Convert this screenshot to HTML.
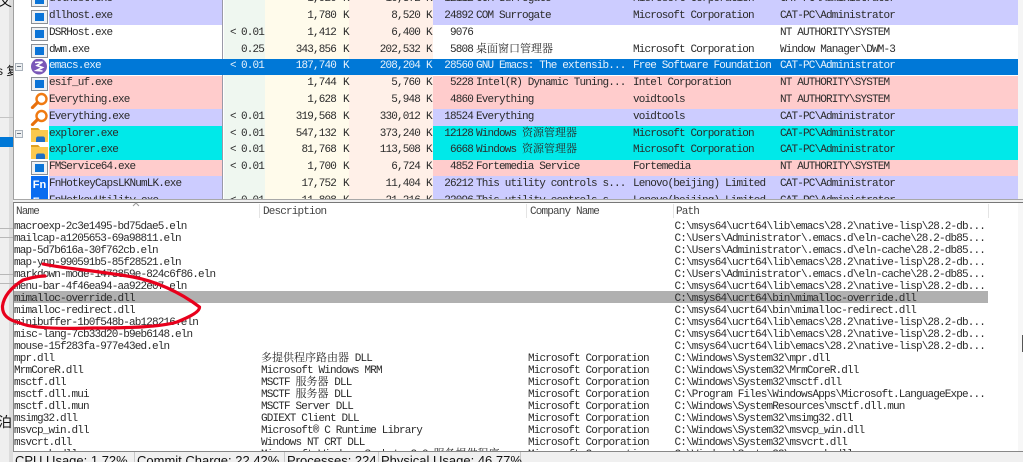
<!DOCTYPE html>
<html><head><meta charset="utf-8"><style>
html,body{margin:0;padding:0;width:1023px;height:462px;overflow:hidden;background:#f0f0f0}
*{box-sizing:border-box}
#root{position:relative;width:1023px;height:462px;overflow:hidden;font-family:"Liberation Mono","Noto Serif CJK SC",monospace;font-size:11px;letter-spacing:-.85px;color:#2a2a2a}
.abs{position:absolute}
#u{position:absolute;left:13px;top:0;width:1010px;height:199px;overflow:hidden;background:#fff}
#u .inner{position:absolute;left:-13px;top:0;width:1023px;height:199px}
.colb{position:absolute;top:0;height:199px}
.r{position:absolute;left:0;width:1023px;height:16.8px;line-height:13px}
.r span,.q span{position:absolute;top:1.5px;white-space:nowrap}
.r span span,.q span span{top:auto}
.bga,.bgb{position:absolute;top:0;height:100%}
.bga{left:49px;width:173px}.bgb{left:433px;width:585px}
.p .bga,.p .bgb{background:#ffcccc}
.b .bga,.b .bgb{background:#ccccff}
.c .bga,.c .bgb{background:#00e9e9}
.sel .all{position:absolute;left:49px;width:969px;top:0;height:16.4px;background:#0078d7}
.sel{color:#e8f2fb}
.n{left:49px}.l{left:230px}.cp{right:759px}.v{right:687px}.k{left:343px}.w{right:603px}.k2{left:426px}
.pid{right:550px}.e{left:476px}.f{left:633px}.g{left:780px}
.z{font-size:11px;letter-spacing:0}
.ic{position:absolute;left:31px;top:1.5px;width:17px;height:14px;background:#eef1f4;border:1px solid #8a8f96}
.ic:after{content:"";position:absolute;left:3px;top:2px;width:9px;height:8px;background:#0a74d8}
svg.i{position:absolute;left:30px;top:0}
.q{position:absolute;left:0;width:1023px;height:12.03px;line-height:12px}
.q .a{left:14px}.q .d{left:261px}.q .o{left:528px}.q .h{left:674.5px}
.hd{position:absolute;top:205px;line-height:14px;color:#444}
.st{position:absolute;top:454px;font:13px/14px "Liberation Sans",sans-serif;letter-spacing:0;color:#111;white-space:nowrap}
.box{position:absolute;left:15px;width:8px;height:8px;background:#eef0f2;border:1px solid #a9b1ba}
.box:after{content:"";position:absolute;left:1px;top:2px;width:4px;height:1px;background:#6a7480}
</style></head><body><div id="root">

<!-- left sliver -->
<div class="abs" style="left:0;top:0;width:13px;height:462px;background:#efefef"></div>
<div class="abs" style="left:9px;top:0;width:4px;height:462px;background:#dcdcdc"></div>
<div class="abs" style="left:0;top:137px;width:13px;height:10px;background:#0078d7"></div>
<div class="abs" style="left:0;top:117px;width:13px;height:1px;background:#c4c4c4"></div>
<div class="abs" style="left:0;top:228px;width:13px;height:1px;background:#b8b8b8"></div>
<div class="abs" style="left:0;top:237px;width:13px;height:1px;background:#b8b8b8"></div>
<div class="abs" style="left:0;top:274px;width:13px;height:1px;background:#b8b8b8"></div>
<div class="abs" style="left:0;top:283px;width:13px;height:1px;background:#b8b8b8"></div>
<div class="abs" style="left:-3px;top:64px;font:12px/14px 'Liberation Sans','Noto Sans CJK SC',sans-serif;letter-spacing:0;color:#111">s 复</div>
<div class="abs" style="left:-2px;top:413px;font:14px/18px 'Liberation Sans','Noto Sans CJK SC',sans-serif;letter-spacing:0;color:#111">泊</div>
<div class="abs" style="left:-2px;top:-7px;font:14px/16px 'Liberation Sans','Noto Sans CJK SC',sans-serif;letter-spacing:0;color:#111">文</div>

<!-- upper panel -->
<div id="u"><div class="inner">
<div class="colb" style="left:224px;width:41px;background:#eff7f0"></div>
<div class="colb" style="left:265px;width:84px;background:#fffbeb"></div>
<div class="colb" style="left:349px;width:84px;background:#fff0e8"></div>
<div class="colb" style="left:222px;width:1px;background:#9a9aa8"></div>

<div class="r b" style="top:-8.4px"><div class="bga"></div><div class="bgb"></div><div class="ic"></div><span class="n">dllhost.exe</span><span class="v">1,920</span><span class="k">K</span><span class="w">10,372</span><span class="k2">K</span><span class="pid">12112</span><span class="e">COM Surrogate</span><span class="f">Microsoft Corporation</span><span class="g">CAT-PC\Administrator</span></div>

<div class="r b" style="top:8.4px"><div class="bga"></div><div class="bgb"></div><div class="ic"></div><span class="n">dllhost.exe</span><span class="v">1,780</span><span class="k">K</span><span class="w">8,520</span><span class="k2">K</span><span class="pid">24892</span><span class="e">COM Surrogate</span><span class="f">Microsoft Corporation</span><span class="g">CAT-PC\Administrator</span></div>

<div class="r" style="top:25.2px"><div class="ic"></div><span class="n">DSRHost.exe</span><span class="l">&lt;</span><span class="cp">0.01</span><span class="v">1,412</span><span class="k">K</span><span class="w">6,400</span><span class="k2">K</span><span class="pid">9076</span><span class="g">NT AUTHORITY\SYSTEM</span></div>

<div class="r" style="top:42px"><div class="ic"></div><span class="n">dwm.exe</span><span class="cp">0.25</span><span class="v">343,856</span><span class="k">K</span><span class="w">202,532</span><span class="k2">K</span><span class="pid">5808</span><span class="e z">桌面窗口管理器</span><span class="f">Microsoft Corporation</span><span class="g">Window Manager\DWM-3</span></div>

<div class="r sel" style="top:58.8px"><div class="all"></div><svg class="i" width="20" height="17" viewBox="0 0 20 17"><circle cx="9" cy="7.5" r="8" fill="#7a58b8"/><path d="M5 3.5 L12.5 3 L7 6.5 L12.5 8.5 L6.5 11.5 L12.5 12" fill="none" stroke="#fff" stroke-width="1.6"/></svg><span class="n">emacs.exe</span><span class="l">&lt;</span><span class="cp">0.01</span><span class="v">187,740</span><span class="k">K</span><span class="w">208,204</span><span class="k2">K</span><span class="pid">28560</span><span class="e">GNU Emacs: The extensib...</span><span class="f">Free Software Foundation</span><span class="g">CAT-PC\Administrator</span></div>

<div class="r p" style="top:75.6px"><div class="bga"></div><div class="bgb"></div><div class="ic"></div><span class="n">esif_uf.exe</span><span class="v">1,744</span><span class="k">K</span><span class="w">5,760</span><span class="k2">K</span><span class="pid">5228</span><span class="e">Intel(R) Dynamic Tuning...</span><span class="f">Intel Corporation</span><span class="g">NT AUTHORITY\SYSTEM</span></div>

<div class="r p" style="top:92.4px"><div class="bga"></div><div class="bgb"></div><svg class="i" width="20" height="17" viewBox="0 0 20 17"><circle cx="11.5" cy="7" r="5" fill="#fff" stroke="#f07a12" stroke-width="2.4"/><path d="M7.5 10.5 L2.5 15.5" stroke="#e8700c" stroke-width="3.2" stroke-linecap="round"/></svg><span class="n">Everything.exe</span><span class="v">1,628</span><span class="k">K</span><span class="w">5,948</span><span class="k2">K</span><span class="pid">4860</span><span class="e">Everything</span><span class="f">voidtools</span><span class="g">NT AUTHORITY\SYSTEM</span></div>

<div class="r b" style="top:109.2px"><div class="bga"></div><div class="bgb"></div><svg class="i" width="20" height="17" viewBox="0 0 20 17"><circle cx="11.5" cy="7" r="5" fill="#fff" stroke="#f07a12" stroke-width="2.4"/><path d="M7.5 10.5 L2.5 15.5" stroke="#e8700c" stroke-width="3.2" stroke-linecap="round"/></svg><span class="n">Everything.exe</span><span class="l">&lt;</span><span class="cp">0.01</span><span class="v">319,568</span><span class="k">K</span><span class="w">330,012</span><span class="k2">K</span><span class="pid">18524</span><span class="e">Everything</span><span class="f">voidtools</span><span class="g">CAT-PC\Administrator</span></div>

<div class="r c" style="top:126px"><div class="bga"></div><div class="bgb"></div><svg class="i" width="20" height="17" viewBox="0 0 20 17"><path d="M1 2 H8 L10 4 H18 V16 H1Z" fill="#fbc94e"/><path d="M1 2 H8 L10 4 H1Z" fill="#e0a020"/><path d="M6 13 Q6 10.5 8 10.5 H13 Q15 10.5 15 13 V16 H6Z" fill="#1f6fc4"/></svg><span class="n">explorer.exe</span><span class="l">&lt;</span><span class="cp">0.01</span><span class="v">547,132</span><span class="k">K</span><span class="w">373,240</span><span class="k2">K</span><span class="pid">12128</span><span class="e">Windows <span class="z" style="position:static">资源管理器</span></span><span class="f">Microsoft Corporation</span><span class="g">CAT-PC\Administrator</span></div>

<div class="r c" style="top:142.8px"><div class="bga"></div><div class="bgb"></div><svg class="i" width="20" height="17" viewBox="0 0 20 17"><path d="M1 2 H8 L10 4 H18 V16 H1Z" fill="#fbc94e"/><path d="M1 2 H8 L10 4 H1Z" fill="#e0a020"/><path d="M6 13 Q6 10.5 8 10.5 H13 Q15 10.5 15 13 V16 H6Z" fill="#1f6fc4"/></svg><span class="n">explorer.exe</span><span class="l">&lt;</span><span class="cp">0.01</span><span class="v">81,768</span><span class="k">K</span><span class="w">113,508</span><span class="k2">K</span><span class="pid">6668</span><span class="e">Windows <span class="z" style="position:static">资源管理器</span></span><span class="f">Microsoft Corporation</span><span class="g">CAT-PC\Administrator</span></div>

<div class="r p" style="top:159.6px"><div class="bga"></div><div class="bgb"></div><div class="ic"></div><span class="n">FMService64.exe</span><span class="l">&lt;</span><span class="cp">0.01</span><span class="v">1,700</span><span class="k">K</span><span class="w">6,724</span><span class="k2">K</span><span class="pid">4852</span><span class="e">Fortemedia Service</span><span class="f">Fortemedia</span><span class="g">NT AUTHORITY\SYSTEM</span></div>

<div class="r b" style="top:176.4px"><div class="bga"></div><div class="bgb"></div><div class="abs" style="left:31px;top:0;width:17px;height:17px;background:#0a6cf0;color:#fff;font:bold 11px/18px 'Liberation Sans',sans-serif;letter-spacing:0;text-align:center">Fn</div><span class="n">FnHotkeyCapsLKNumLK.exe</span><span class="v">17,752</span><span class="k">K</span><span class="w">11,404</span><span class="k2">K</span><span class="pid">26212</span><span class="e">This utility controls s...</span><span class="f">Lenovo(beijing) Limited</span><span class="g">CAT-PC\Administrator</span></div>

<div class="r b" style="top:193.2px"><div class="bga"></div><div class="bgb"></div><div class="abs" style="left:31px;top:0;width:17px;height:17px;background:#0a6cf0;color:#fff;font:bold 11px/18px 'Liberation Sans',sans-serif;letter-spacing:0;text-align:center">Fn</div><span class="n">FnHotkeyUtility.exe</span><span class="l">&lt;</span><span class="cp">0.01</span><span class="v">11,808</span><span class="k">K</span><span class="w">21,216</span><span class="k2">K</span><span class="pid">22096</span><span class="e">This utility controls s...</span><span class="f">Lenovo(beijing) Limited</span><span class="g">CAT-PC\Administrator</span></div>

<div class="box" style="top:63px"></div>
<div class="box" style="top:130px"></div>
</div></div>

<div class="abs" style="left:13px;top:0;width:1px;height:199px;background:#a0a0a0"></div>
<div class="abs" style="left:1018px;top:0;width:5px;height:199px;background:#f5f5f5"></div>
<div class="abs" style="left:13px;top:199px;width:1010px;height:1px;background:#a8a8a8"></div>

<!-- lower panel -->
<div class="abs" style="left:13px;top:202px;width:1010px;height:250px;background:#fff;border-top:1px solid #777;border-left:1px solid #888;border-bottom:1px solid #888"></div>
<div class="abs" style="left:1018px;top:203px;width:5px;height:248px;background:#f7f7f7"></div>
<div class="abs" style="left:1022px;top:335px;width:1px;height:17px;background:#555"></div>
<div class="abs" style="left:259px;top:204px;width:1px;height:14px;background:#e4e4e4"></div>
<div class="abs" style="left:526px;top:204px;width:1px;height:14px;background:#e4e4e4"></div>
<div class="abs" style="left:673px;top:204px;width:1px;height:14px;background:#e4e4e4"></div>
<div class="abs" style="left:988px;top:204px;width:1px;height:14px;background:#e4e4e4"></div>
<svg class="abs" style="left:132px;top:202px" width="8" height="5" viewBox="0 0 8 5"><path d="M1 4 L4 1 L7 4" fill="none" stroke="#999"/></svg>
<div class="hd" style="left:16px">Name</div>
<div class="hd" style="left:263px">Description</div>
<div class="hd" style="left:530px">Company Name</div>
<div class="hd" style="left:676px">Path</div>

<div class="abs" style="left:14px;top:291px;width:974px;height:12px;background:#b0b0b0"></div>

<div class="abs" style="left:0;top:0;width:1023px;height:451px;overflow:hidden">
<div class="q" style="top:219px"><span class="a">macroexp-2c3e1495-bd75dae5.eln</span><span class="h">C:\msys64\ucrt64\lib\emacs\28.2\native-lisp\28.2-db...</span></div>
<div class="q" style="top:231.03px"><span class="a">mailcap-a1205653-69a98811.eln</span><span class="h">C:\Users\Administrator\.emacs.d\eln-cache\28.2-db85...</span></div>
<div class="q" style="top:243.06px"><span class="a">map-5d7b616a-30f762cb.eln</span><span class="h">C:\Users\Administrator\.emacs.d\eln-cache\28.2-db85...</span></div>
<div class="q" style="top:255.09px"><span class="a">map-ynp-990591b5-85f28521.eln</span><span class="h">C:\msys64\ucrt64\lib\emacs\28.2\native-lisp\28.2-db...</span></div>
<div class="q" style="top:267.12px"><span class="a">markdown-mode-1473859e-824c6f86.eln</span><span class="h">C:\Users\Administrator\.emacs.d\eln-cache\28.2-db85...</span></div>
<div class="q" style="top:279.15px"><span class="a">menu-bar-4f46ea94-aa922e07.eln</span><span class="h">C:\msys64\ucrt64\lib\emacs\28.2\native-lisp\28.2-db...</span></div>
<div class="q" style="top:291.18px"><span class="a">mimalloc-override.dll</span><span class="h">C:\msys64\ucrt64\bin\mimalloc-override.dll</span></div>
<div class="q" style="top:303.21px"><span class="a">mimalloc-redirect.dll</span><span class="h">C:\msys64\ucrt64\bin\mimalloc-redirect.dll</span></div>
<div class="q" style="top:315.24px"><span class="a">minibuffer-1b0f548b-ab128216.eln</span><span class="h">C:\msys64\ucrt64\lib\emacs\28.2\native-lisp\28.2-db...</span></div>
<div class="q" style="top:327.27px"><span class="a">misc-lang-7cb33d20-b9eb6148.eln</span><span class="h">C:\msys64\ucrt64\lib\emacs\28.2\native-lisp\28.2-db...</span></div>
<div class="q" style="top:339.3px"><span class="a">mouse-15f283fa-977e43ed.eln</span><span class="h">C:\msys64\ucrt64\lib\emacs\28.2\native-lisp\28.2-db...</span></div>
<div class="q" style="top:351.33px"><span class="a">mpr.dll</span><span class="d"><span class="z" style="position:static">多提供程序路由器</span> DLL</span><span class="o">Microsoft Corporation</span><span class="h">C:\Windows\System32\mpr.dll</span></div>
<div class="q" style="top:363.36px"><span class="a">MrmCoreR.dll</span><span class="d">Microsoft Windows MRM</span><span class="o">Microsoft Corporation</span><span class="h">C:\Windows\System32\MrmCoreR.dll</span></div>
<div class="q" style="top:375.39px"><span class="a">msctf.dll</span><span class="d">MSCTF <span class="z" style="position:static">服务器</span> DLL</span><span class="o">Microsoft Corporation</span><span class="h">C:\Windows\System32\msctf.dll</span></div>
<div class="q" style="top:387.42px"><span class="a">msctf.dll.mui</span><span class="d">MSCTF <span class="z" style="position:static">服务器</span> DLL</span><span class="o">Microsoft Corporation</span><span class="h">C:\Program Files\WindowsApps\Microsoft.LanguageExpe...</span></div>
<div class="q" style="top:399.45px"><span class="a">msctf.dll.mun</span><span class="d">MSCTF Server DLL</span><span class="o">Microsoft Corporation</span><span class="h">C:\Windows\SystemResources\msctf.dll.mun</span></div>
<div class="q" style="top:411.48px"><span class="a">msimg32.dll</span><span class="d">GDIEXT Client DLL</span><span class="o">Microsoft Corporation</span><span class="h">C:\Windows\System32\msimg32.dll</span></div>
<div class="q" style="top:423.51px"><span class="a">msvcp_win.dll</span><span class="d">Microsoft® C Runtime Library</span><span class="o">Microsoft Corporation</span><span class="h">C:\Windows\System32\msvcp_win.dll</span></div>
<div class="q" style="top:435.54px"><span class="a">msvcrt.dll</span><span class="d">Windows NT CRT DLL</span><span class="o">Microsoft Corporation</span><span class="h">C:\Windows\System32\msvcrt.dll</span></div>
<div class="q" style="top:447.57px"><span class="a">mswsock.dll</span><span class="d">Microsoft Windows Sockets 2.0 <span class="z" style="position:static">服务提供程序</span></span><span class="o">Microsoft Corporation</span><span class="h">C:\Windows\System32\mswsock.dll</span></div>
</div>

<!-- status bar -->
<div class="abs" style="left:13px;top:452px;width:1010px;height:10px;background:#f0f0f0"></div>
<div class="abs" style="left:134px;top:452px;width:1px;height:10px;background:#c8c8c8"></div>
<div class="abs" style="left:284px;top:452px;width:1px;height:10px;background:#c8c8c8"></div>
<div class="abs" style="left:378px;top:452px;width:1px;height:10px;background:#c8c8c8"></div>
<div class="abs" style="left:520px;top:452px;width:1px;height:10px;background:#c8c8c8"></div>
<div class="st" style="left:15px">CPU Usage: 1.72%</div>
<div class="st" style="left:137px">Commit Charge: 22.42%</div>
<div class="st" style="left:287px">Processes: 224</div>
<div class="st" style="left:381px">Physical Usage: 46.77%</div>

<!-- red hand-drawn circle -->
<svg class="abs" style="left:0;top:0;pointer-events:none" width="1023" height="462" viewBox="0 0 1023 462"><path d="M43 264 C60 268 100 271 133 277 C155 281 180 292 199.5 307 C200 311 192 316 177 322 C160 327 130 328 93 328 C60 329 30 328 20 323 C8 320 2 315 2.5 306 C4 295 12 287 23 280 C30 278 40 276 45 276" fill="none" stroke="#e8001c" stroke-width="3.2" stroke-linecap="round"/></svg>
</div></body></html>
